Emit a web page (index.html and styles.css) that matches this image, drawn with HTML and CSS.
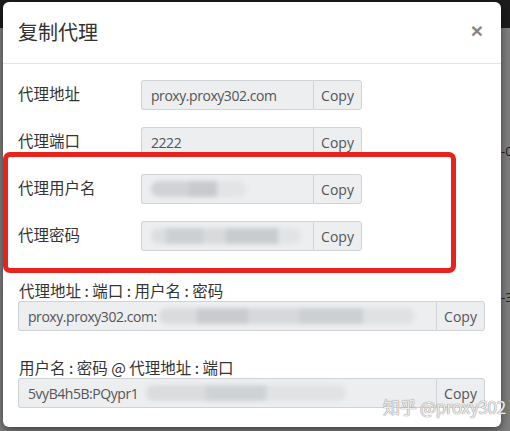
FILE: index.html
```html
<!DOCTYPE html>
<html lang="zh-CN">
<head>
<meta charset="utf-8">
<title>复制代理</title>
<link rel="stylesheet" href="styles.css">
</head>
<body>
<div class="page">
  <div class="topbar"></div>
  <div class="shade">
    <span class="peek peek-a">-0</span>
    <span class="peek peek-b">-3</span>
  </div>
</div>

<div class="modal">
  <div class="modal-header">
    <h4 class="modal-title">复制代理</h4>
    <button class="close" type="button">&times;</button>
  </div>
  <div class="modal-body">
    <div class="row">
      <label class="row-label">代理地址</label>
      <div class="group short">
        <div class="field">proxy.proxy302.com</div>
        <button class="copy" type="button">Copy</button>
      </div>
    </div>
    <div class="row">
      <label class="row-label">代理端口</label>
      <div class="group short">
        <div class="field">2222</div>
        <button class="copy" type="button">Copy</button>
      </div>
    </div>
    <div class="row">
      <label class="row-label">代理用户名</label>
      <div class="group short">
        <div class="field"><span class="smear smear-user"></span></div>
        <button class="copy" type="button">Copy</button>
      </div>
    </div>
    <div class="row">
      <label class="row-label">代理密码</label>
      <div class="group short">
        <div class="field"><span class="smear smear-pass"></span></div>
        <button class="copy" type="button">Copy</button>
      </div>
    </div>

    <div class="block first">
      <div class="block-label">代理地址 : 端口 : 用户名 : 密码</div>
      <div class="group wide">
        <div class="field">proxy.proxy302.com:<span class="smear smear-long"></span></div>
        <button class="copy" type="button">Copy</button>
      </div>
    </div>
    <div class="block">
      <div class="block-label">用户名 : 密码 @ 代理地址 : 端口</div>
      <div class="group wide">
        <div class="field">5vyB4h5B:PQypr1<span class="smear smear-tail"></span></div>
        <button class="copy" type="button">Copy</button>
      </div>
    </div>
  </div>
  <div class="highlight"></div>
</div>

<div class="mark">知乎 @proxy302</div>
</body>
</html>
```

FILE: styles.css
```css
* {
  box-sizing: border-box;
}

html, body {
  margin: 0;
  padding: 0;
  width: 510px;
  height: 431px;
  overflow: hidden;
}

body {
  font-family: "Noto Sans CJK SC", "Noto Sans", sans-serif;
  color: #333;
  background: #7b7b7b;
  position: relative;
}

/* dimmed page behind the dialog */
.page {
  display: flex;
  flex-direction: column;
  height: 431px;
}

.topbar {
  height: 28px;
  background: #1c1c1c;
}

.shade {
  flex: 1;
  background: #7e7e7e;
  position: relative;
}

.peek {
  position: absolute;
  left: 501px;
  font: 13px "Open Sans", sans-serif;
  color: #222;
}
.peek-a { top: 114px; }
.peek-b { top: 260px; }

/* dialog */
.modal {
  position: absolute;
  left: 3px;
  top: 2px;
  width: 498px;
  height: 425px;
  background: #fff;
  border-radius: 6px;
  box-shadow: 0 3px 9px rgba(0, 0, 0, 0.5);
}

.modal-header {
  height: 62px;
  display: flex;
  align-items: center;
  justify-content: space-between;
  padding: 0 18px 0 15px;
  border-bottom: 1px solid #e5e5e5;
}

.modal-title {
  margin: 0;
  font-size: 20px;
  font-weight: 400;
  color: #333;
  line-height: 1;
  position: relative;
  top: -1px;
}

.close {
  border: 0;
  background: none;
  padding: 0;
  font: 700 21px "Liberation Sans", sans-serif;
  color: #858585;
  line-height: 1;
  position: relative;
  top: -2px;
}

.modal-body {
  padding: 16px 15px 0 15px;
  display: flex;
  flex-direction: column;
}

.row {
  display: flex;
  align-items: center;
  height: 30px;
  margin-bottom: 17px;
}

.row-label {
  width: 123px;
  font-size: 15.5px;
  color: #333;
  position: relative;
  top: -2px;
}

.group {
  display: flex;
  height: 30px;
}

.group.short { width: 221px; }
.group.wide { width: 467px; }

.field {
  flex: 1;
  display: flex;
  align-items: center;
  padding: 0 9px;
  background: #eceef0;
  border: 1px solid #cfd3d6;
  border-right: 0;
  border-radius: 3px 0 0 3px;
  font: 14px "Open Sans", sans-serif;
  letter-spacing: -0.45px;
  color: #555;
  white-space: nowrap;
  overflow: hidden;
  position: relative;
}

.copy {
  width: 49px;
  border: 1px solid #cfd3d6;
  background: #eceef0;
  border-radius: 0 3px 3px 0;
  font: 14px "Open Sans", sans-serif;
  color: #555;
  padding: 0;
}

.block {
  display: flex;
  flex-direction: column;
  gap: 1px;
}

.block.first {
  margin-top: 12px;
  margin-bottom: 26px;
}

.block-label {
  font-size: 15.5px;
  line-height: 20px;
  color: #333;
  padding-left: 1px;
}

/* blurred-out credentials */
.smear {
  display: inline-block;
  height: 16px;
  filter: blur(2px);
  border-radius: 8px;
}

.smear-user {
  width: 95px;
  background: linear-gradient(90deg, #d0d2d5 0 40%, #c8cacd 40% 70%, #e2e4e6 70% 100%);
}

.smear-pass {
  width: 150px;
  background: linear-gradient(90deg, #dcdee0 0 10%, #cdd0d3 10% 35%, #d8dadc 35% 50%, #c9ccce 50% 85%, #e1e3e5 85% 100%);
}

.smear-long {
  width: 255px;
  background: linear-gradient(90deg, #d9dbdd 0 15%, #c9cbce 15% 35%, #d6d8db 35% 55%, #cdd0d2 55% 80%, #dfe1e3 80% 100%);
  margin-left: 2px;
}

.smear-tail {
  width: 200px;
  background: linear-gradient(90deg, #dadcde 0 30%, #cfd2d4 30% 60%, #e0e2e4 60% 100%);
  margin-left: 8px;
}

/* red annotation frame */
.highlight {
  position: absolute;
  left: 0;
  top: 150px;
  width: 453px;
  height: 121px;
  border: 5px solid #e8221d;
  border-radius: 7px;
}

.mark {
  position: absolute;
  left: 383px;
  top: 394px;
  font-size: 17px;
  font-family: "Noto Sans CJK SC", "Noto Sans", sans-serif;
  color: rgba(255, 255, 255, 0.85);
  text-shadow: 0 0 1px #888, 0 0 1px #888;
  letter-spacing: -0.3px;
}
```
